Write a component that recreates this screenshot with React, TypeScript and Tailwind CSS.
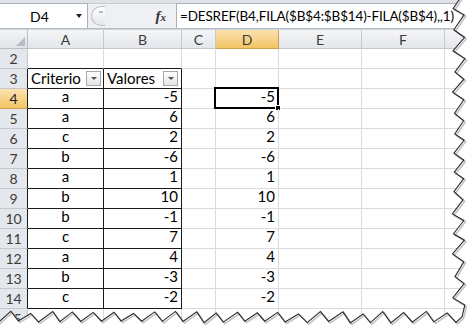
import React from "react";

type Row = { n: number; a?: string; b?: number; d?: number };

const rows: Row[] = [
  { n: 2 },
  { n: 3 },
  { n: 4, a: "a", b: -5, d: -5 },
  { n: 5, a: "a", b: 6, d: 6 },
  { n: 6, a: "c", b: 2, d: 2 },
  { n: 7, a: "b", b: -6, d: -6 },
  { n: 8, a: "a", b: 1, d: 1 },
  { n: 9, a: "b", b: 10, d: 10 },
  { n: 10, a: "b", b: -1, d: -1 },
  { n: 11, a: "c", b: 7, d: 7 },
  { n: 12, a: "a", b: 4, d: 4 },
  { n: 13, a: "b", b: -3, d: -3 },
  { n: 14, a: "c", b: -2, d: -2 },
  { n: 15 },
];

// pseudo random jitter so the torn edge is stable between renders
const rnd = (i: number) => {
  const x = Math.sin(i * 12.9898) * 43758.5453;
  return x - Math.floor(x);
};

const tearPoints = () => {
  const pts: [number, number][] = [];
  let y = -6;
  let i = 0;
  while (y < 312) {
    // "<" shaped teeth: long slope down-left, short return
    pts.push([i % 2 ? 452 + rnd(i + 3) * 3 : 463 + rnd(i + 7) * 2, y]);
    y += i % 2 ? 6 + rnd(i + 11) * 2 : 12 + rnd(i + 11) * 3;
    i++;
  }
  pts.push([462, 317]);
  let x = 456;
  i = 0;
  while (x > -4) {
    pts.push([x, i % 2 ? 311 + rnd(i + 21) * 3 : 321 + rnd(i + 31) * 2]);
    x -= i % 2 ? 12 + rnd(i + 41) * 3 : 7 + rnd(i + 41) * 2;
    i++;
  }
  pts.push([-4, 320]);
  return pts;
};

const FilterButton = () => (
  <div className="w-[15px] h-[15px] border border-[#a8a8a8] bg-gradient-to-b from-white to-[#e4e4e4] flex items-center justify-center">
    <div className="w-0 h-0 border-l-[3px] border-r-[3px] border-t-[3px] border-l-transparent border-r-transparent border-t-[#555]" />
  </div>
);

const TornEdge = () => {
  const pts = tearPoints();
  const line = pts.map((p) => p.join(",")).join(" ");
  const outside = line + " -4,340 480,340 480,-6";
  return (
    <svg className="absolute inset-0 pointer-events-none" width="474" height="335" viewBox="0 0 474 335">
      <polygon points={outside} fill="#ffffff" />
      <polyline points={line} transform="translate(1.5,1.5)" fill="none" stroke="#9a9a9a" strokeWidth="1.6" opacity="0.6" />
      <polyline points={line} fill="none" stroke="#2a2a2a" strokeWidth="1.1" />
    </svg>
  );
};

const header = "bg-gradient-to-b from-[#f5f6f8] to-[#e3e6ea] border-r border-b border-[#c3c8ce] flex items-center justify-center";

export default function App() {
  return (
    <div className="relative w-[474px] h-[335px] overflow-hidden bg-white font-['Lato','Liberation_Sans',sans-serif] text-[15px] text-black">
      {/* formula bar */}
      <div className="flex h-[28px] bg-[#dfe3e8] pt-[3px]">
        <div className="w-[88px] bg-white border-t border-r border-[#a9b1bb] flex items-center pl-[30px] pr-[5px] text-[14px]">
          <span className="flex-1">D4</span>
          <div className="w-0 h-0 border-l-[3.5px] border-r-[3.5px] border-t-[4px] border-l-transparent border-r-transparent border-t-[#222]" />
        </div>
        <div className="w-[88px] bg-[#eef0f3] border-t border-[#c6ccd3] flex items-center">
          <div className="ml-[3px] w-[14px] h-[20px] rounded-l-full border border-r-0 border-[#b9bfc7] bg-gradient-to-b from-white to-[#e3e6ea] flex items-start justify-end pt-[4px] pr-[2px]">
            <div className="w-[4px] h-[2px] bg-[#b5bcc4]" />
          </div>
          <span className="ml-auto mr-[10px] font-['Liberation_Serif',serif] italic font-bold text-[15px] text-[#333]">
            f<span className="text-[11px]">x</span>
          </span>
        </div>
        <div className="flex-1 bg-white border-t border-l border-[#a9b1bb] flex items-center pl-[3px] whitespace-nowrap text-[13.5px] tracking-[-0.15px]">
          =DESREF(B4,FILA($B$4:$B$14)-FILA($B$4),,1)
        </div>
      </div>
      <div className="h-[2px] bg-[#cfd4da] border-t border-[#b6bcc4]" />

      {/* column headers */}
      <div className="flex h-[19px] text-[14px] text-[#3b3b3b]">
        <div className="w-[28px] bg-gradient-to-b from-[#f2f3f5] to-[#e1e4e8] border-r border-b border-[#b8bec6] flex items-end justify-end p-[2px]">
          <svg width="9" height="9" viewBox="0 0 9 9">
            <polygon points="9,0 9,9 0,9" fill="#b6bcc4" />
          </svg>
        </div>
        <div className={"w-[76px] " + header}>A</div>
        <div className={"w-[78px] " + header}>B</div>
        <div className={"w-[34px] " + header}>C</div>
        <div className="w-[63px] bg-gradient-to-b from-[#fbe3ae] to-[#f2c462] border-r border-b border-[#c9a24f] flex items-center justify-center">D</div>
        <div className={"w-[83px] " + header}>E</div>
        <div className={"w-[83px] " + header}>F</div>
        <div className="flex-1 bg-gradient-to-b from-[#f5f6f8] to-[#e3e6ea] border-b border-[#c3c8ce]" />
      </div>

      {/* rows */}
      {rows.map((r) => {
        const inTable = r.n >= 3 && r.n <= 14;
        const selected = r.n === 4;
        return (
          <div key={r.n} className="flex h-[20px]">
            <div
              className={
                selected
                  ? "w-[28px] bg-gradient-to-b from-[#fbe3ae] to-[#f2c462] border-b border-[#c9a24f] border-r border-r-[#1a1a1a] flex items-center justify-center text-[14px] text-[#222]"
                  : inTable
                  ? "w-[28px] bg-[#e4e7eb] border-b border-[#c3c8ce] border-r border-r-[#1a1a1a] flex items-center justify-center text-[14px] text-[#3b3b3b]"
                  : "w-[28px] bg-[#e4e7eb] border-b border-r border-[#c3c8ce] flex items-center justify-center text-[14px] text-[#3b3b3b]"
              }
            >
              {r.n}
            </div>
            <div
              className={
                inTable
                  ? "w-[76px] border-r border-b border-[#1a1a1a] flex items-end justify-center pb-[1px]"
                  : r.n === 2
                  ? "w-[76px] border-r border-[#dadcdd] border-b border-b-[#1a1a1a]"
                  : "w-[76px] border-r border-b border-[#dadcdd]"
              }
            >
              {r.n === 3 ? (
                <div className="flex w-full items-center justify-between pl-[3px] pr-[2px] h-full">
                  <span>Criterio</span>
                  <FilterButton />
                </div>
              ) : (
                r.a
              )}
            </div>
            <div
              className={
                inTable
                  ? "w-[78px] border-r border-b border-[#1a1a1a] flex items-end justify-end pr-[3px] pb-[1px]"
                  : r.n === 2
                  ? "w-[78px] border-r border-[#dadcdd] border-b border-b-[#1a1a1a]"
                  : "w-[78px] border-r border-b border-[#dadcdd]"
              }
            >
              {r.n === 3 ? (
                <div className="flex w-full items-center justify-between pl-[3px] h-full">
                  <span>Valores</span>
                  <FilterButton />
                </div>
              ) : (
                r.b
              )}
            </div>
            <div className="w-[34px] border-r border-b border-[#dadcdd]" />
            <div className="relative w-[63px] border-r border-b border-[#dadcdd] flex items-end justify-end pr-[3px] pb-[1px]">
              {r.d}
              {selected && (
                <div className="absolute -left-[2px] -top-[2px] w-[65px] h-[22px] border-[2.5px] border-black">
                  <div className="absolute -right-[4px] -bottom-[4px] w-[6px] h-[6px] bg-black border border-white" />
                </div>
              )}
            </div>
            <div className="w-[83px] border-r border-b border-[#dadcdd]" />
            <div className="w-[83px] border-r border-b border-[#dadcdd]" />
            <div className="flex-1 border-b border-[#dadcdd]" />
          </div>
        );
      })}

      <TornEdge />
    </div>
  );
}
